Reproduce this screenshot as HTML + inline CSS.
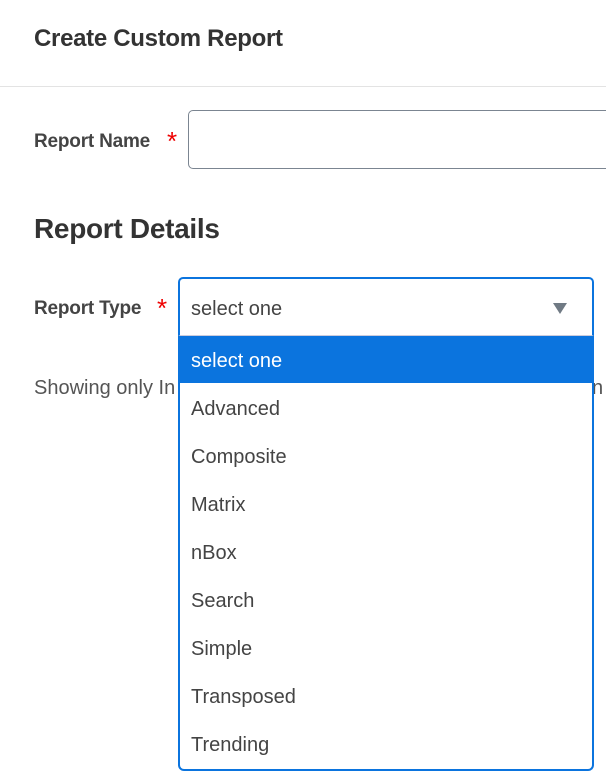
<!DOCTYPE html>
<html><head><style>
*{margin:0;padding:0;box-sizing:border-box}
body{width:606px;height:781px;background:#fff;font-family:"Liberation Sans",Arial,sans-serif;color:#333;position:relative;overflow:hidden}
h1{position:absolute;left:34px;top:25px;font-size:24px;font-weight:bold;color:#333;letter-spacing:-0.3px}
.hr{position:absolute;left:0;top:86px;width:606px;height:1px;background:#e3e3e3}
.lbl{position:absolute;font-size:19px;color:#444;font-weight:bold;letter-spacing:-0.2px;line-height:22px}
.star{position:absolute;color:#e00;font-size:26px;line-height:26px;font-weight:normal}
.inp{position:absolute;left:188px;top:110px;width:430px;height:59px;border:1px solid #7b8591;border-radius:5px}
h2{position:absolute;left:34px;top:213px;font-size:28px;font-weight:bold;color:#333;letter-spacing:-0.3px}
.sel{position:absolute;left:178px;top:277px;width:416px;height:59px;border:2px solid #0b74de;border-bottom:none;border-radius:5px 5px 0 0;font-size:20px;color:#444;padding:19px 0 0 11px}
.tri{position:absolute;right:25px;top:24px;width:0;height:0;border-left:7px solid transparent;border-right:7px solid transparent;border-top:11px solid #707a84}
.list{position:absolute;left:178px;top:335px;width:416px;height:436px;border:2px solid #0b74de;border-top:1px solid #ccd;border-radius:0 0 6px 6px;background:#fff}
.it{height:48px;font-size:20px;color:#444;padding:15px 0 0 11px}
.it.on{background:#0b74de;color:#fff;height:47px;padding-top:14px}
.show{position:absolute;left:34px;top:377px;font-size:20px;color:#555}
</style></head><body>
<h1>Create Custom Report</h1>
<div class="hr"></div>
<div class="lbl" style="left:34px;top:131px">Report Name</div>
<div class="star" style="left:167px;top:128px">*</div>
<div class="inp"></div>
<h2>Report Details</h2>
<div class="lbl" style="left:34px;top:298px">Report Type</div>
<div class="star" style="left:157px;top:295px">*</div>
<div class="show">Showing only In<span style="position:absolute;left:558px">n</span></div>
<div class="sel">select one<div class="tri"></div></div>
<div class="list">
<div class="it on">select one</div>
<div class="it">Advanced</div>
<div class="it">Composite</div>
<div class="it">Matrix</div>
<div class="it">nBox</div>
<div class="it">Search</div>
<div class="it">Simple</div>
<div class="it">Transposed</div>
<div class="it">Trending</div>
</div>
</body></html>
